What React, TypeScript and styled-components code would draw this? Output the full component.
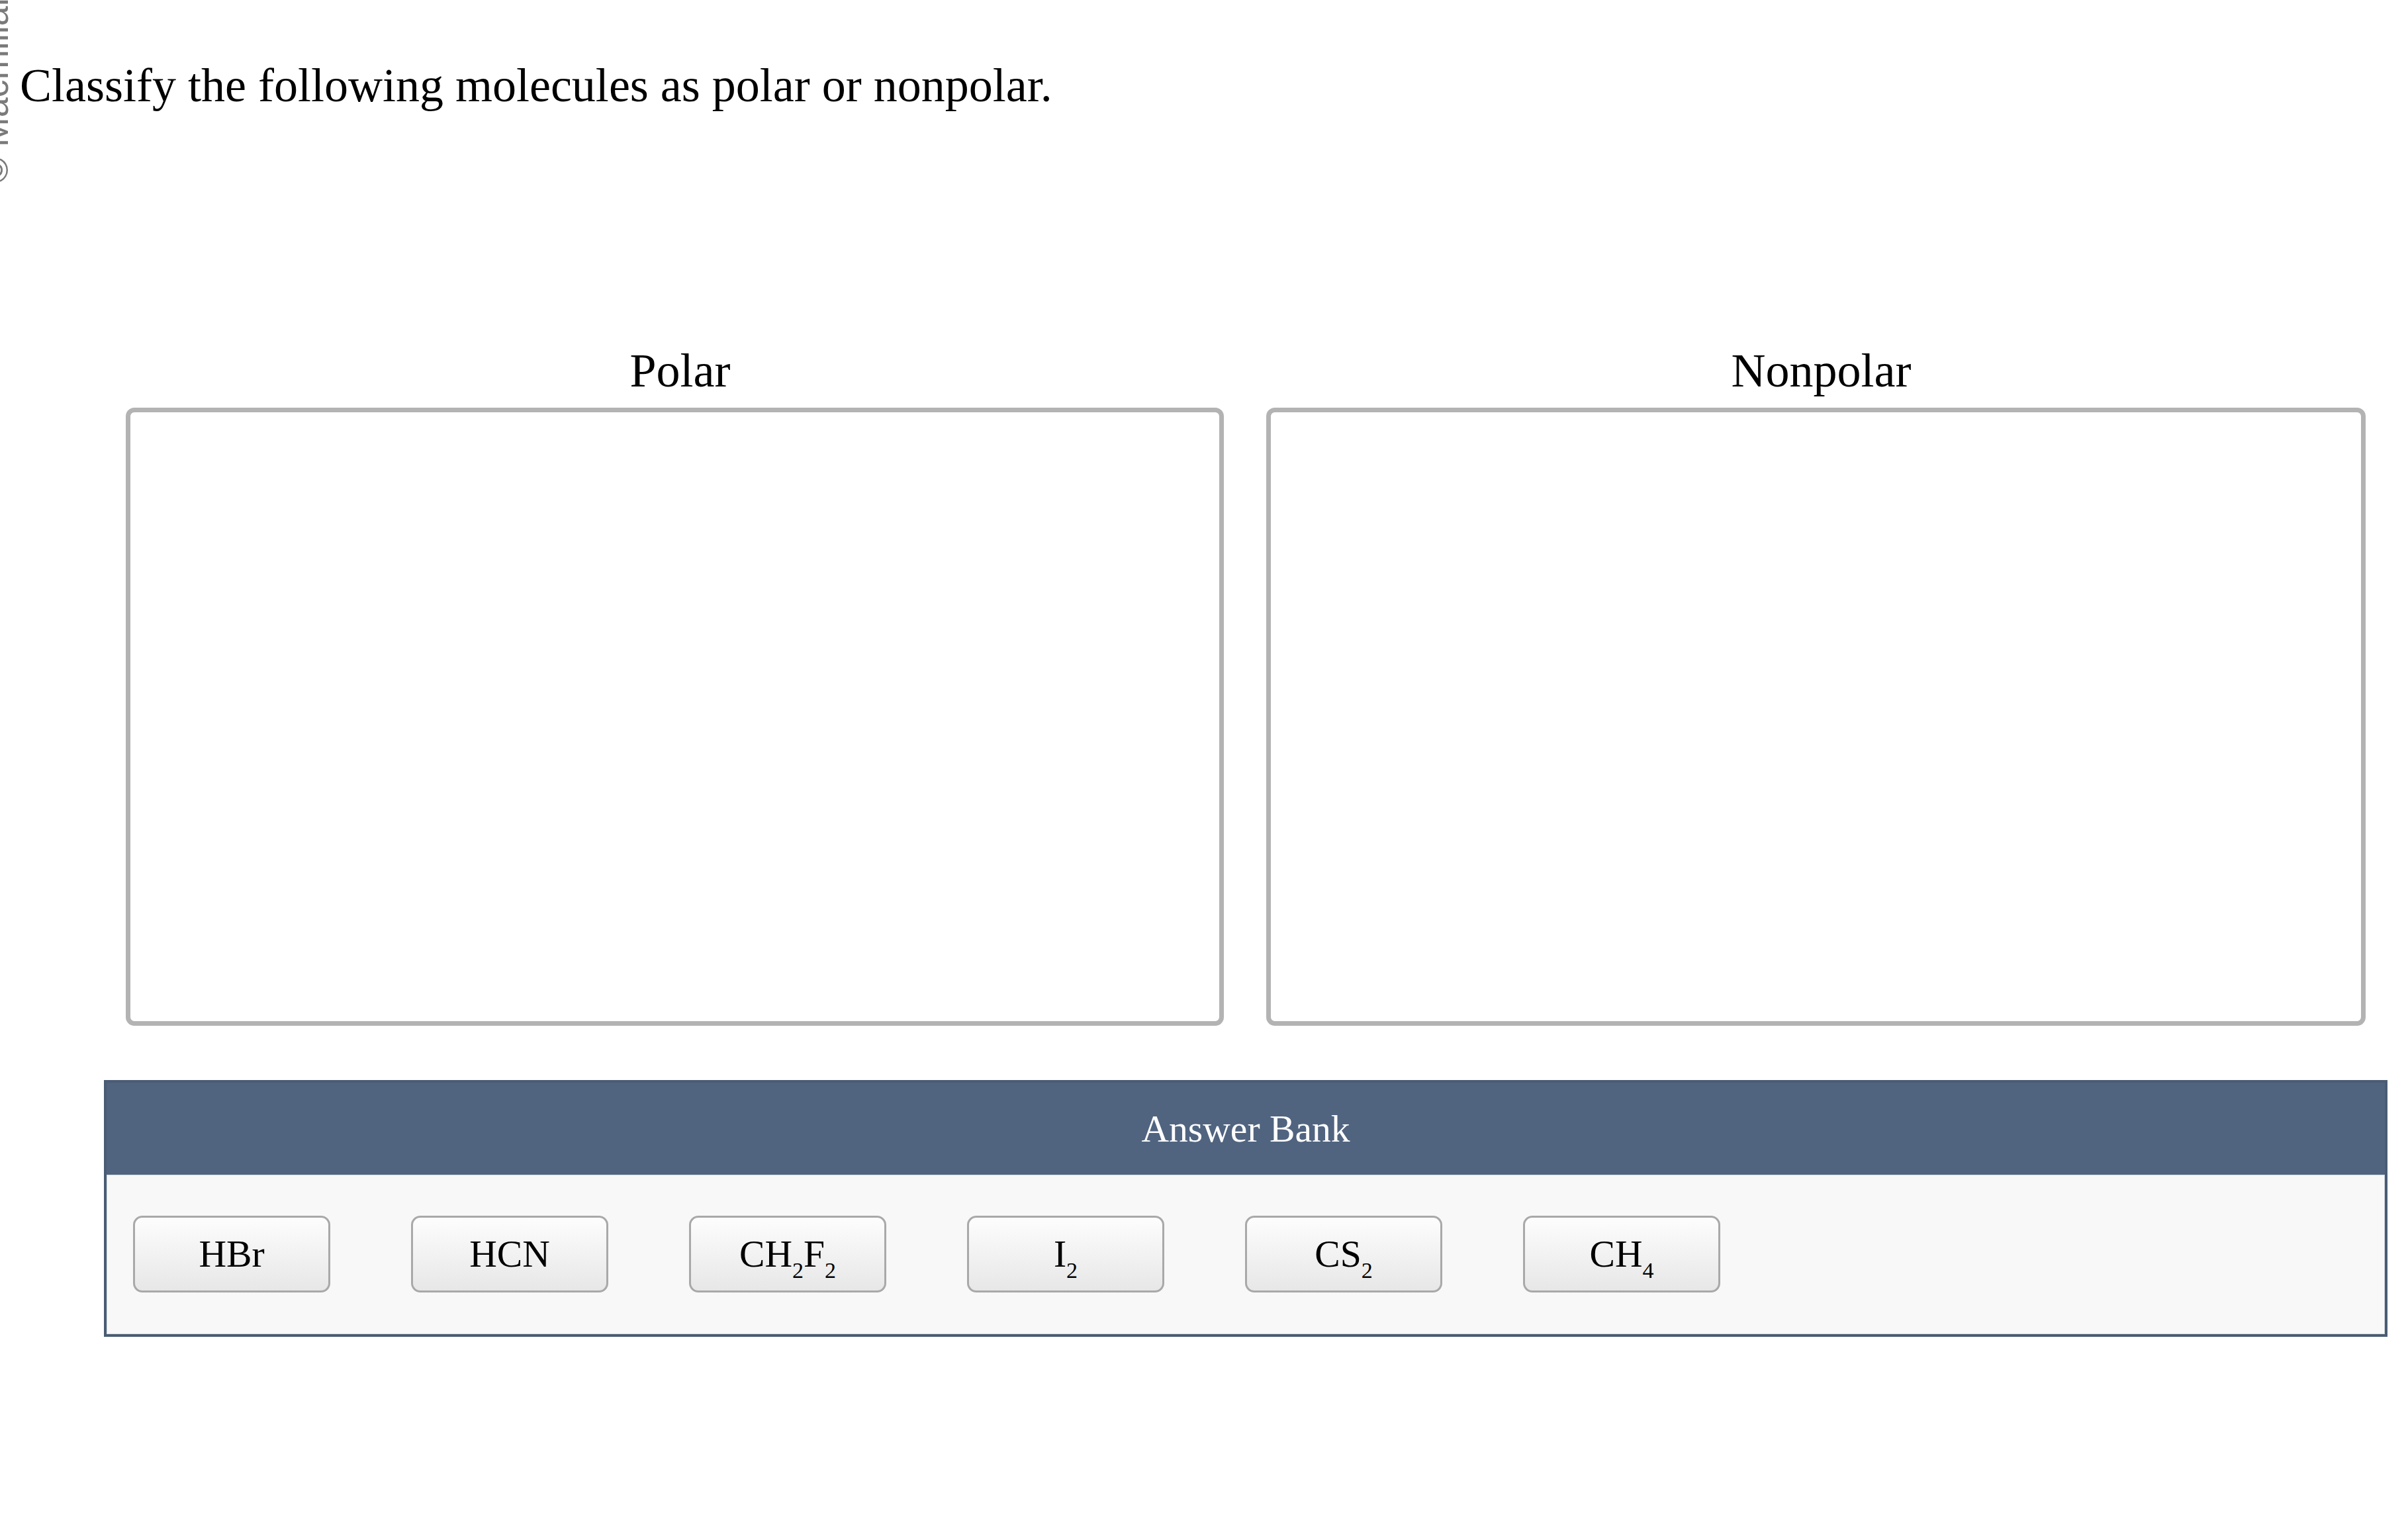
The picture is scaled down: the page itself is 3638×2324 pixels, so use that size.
import styled, { createGlobalStyle } from 'styled-components';

const GlobalStyle = createGlobalStyle`
  html, body {
    margin: 0;
    padding: 0;
    background: #ffffff;
  }

  body {
    font-family: 'Liberation Serif', 'Times New Roman', serif;
    color: #000000;
  }
`;

const Page = styled.div`
  position: relative;
  overflow: hidden;
  min-height: 2324px;
  padding-top: 89px;
  box-sizing: border-box;
`;

// watermark down the left edge, mostly off-page like in the original
const Watermark = styled.span`
  position: absolute;
  left: -34px;
  top: 277px;
  transform-origin: 0 0;
  transform: rotate(-90deg);
  font-family: 'Liberation Sans', Arial, sans-serif;
  font-size: 54px;
  line-height: 54px;
  color: #7a7a7a;
  white-space: nowrap;
`;

const Title = styled.h1`
  margin: 0 0 0 30px;
  font-size: 72px;
  line-height: 80px;
  font-weight: normal;
`;

const Columns = styled.div`
  display: grid;
  grid-template-columns: 1659px 1661px;
  column-gap: 64px;
  margin: 351px 0 0 190px;
`;

const Column = styled.div`
  display: flex;
  flex-direction: column;
`;

const ColumnLabel = styled.div`
  padding-left: 16px;
  text-align: center;
  font-size: 72px;
  line-height: 80px;
`;

const DropZone = styled.div`
  margin-top: 16px;
  height: 934px;
  box-sizing: border-box;
  border: 7px solid #b3b3b3;
  border-radius: 13px;
  background: #ffffff;
`;

const Bank = styled.section`
  margin: 82px 0 0 157px;
  width: 3450px;
  box-sizing: border-box;
  border: 4px solid #4a5c74;
`;

const BankHeader = styled.div`
  display: flex;
  align-items: center;
  justify-content: center;
  height: 139px;
  background: #506480;
  color: #ffffff;
  font-size: 57.6px;
`;

const BankBody = styled.div`
  display: flex;
  gap: 122px;
  padding: 62px 38px 63px 40px;
  background: #f8f8f8;
  box-shadow: inset 0 0 0 1px #d4d9df;
`;

const Chip = styled.div`
  display: flex;
  align-items: center;
  justify-content: center;
  width: 298px;
  height: 116px;
  box-sizing: border-box;
  border: 3px solid #a9a9a9;
  border-radius: 14px;
  background: linear-gradient(#fdfdfd, #e7e7e7);
`;

const FormulaText = styled.span`
  font-size: 57.6px;
  line-height: 66px;
  white-space: nowrap;
`;

const Sub = styled.sub`
  font-size: 34px;
  line-height: 0;
  vertical-align: -17px;
`;

type Part = string | { sub: string };

const molecules: Part[][] = [
  ['HBr'],
  ['HCN'],
  ['CH', { sub: '2' }, 'F', { sub: '2' }],
  ['I', { sub: '2' }],
  ['CS', { sub: '2' }],
  ['CH', { sub: '4' }],
];

function Formula({ parts }: { parts: Part[] }) {
  return (
    <FormulaText>
      {parts.map((p, i) =>
        typeof p === 'string' ? p : <Sub key={i}>{p.sub}</Sub>
      )}
    </FormulaText>
  );
}

export default function App() {
  return (
    <>
      <GlobalStyle />
      <Page>
        <Watermark>© Macmillan Learning</Watermark>
        <Title>Classify the following molecules as polar or nonpolar.</Title>

        <Columns>
          <Column>
            <ColumnLabel>Polar</ColumnLabel>
            <DropZone />
          </Column>
          <Column>
            <ColumnLabel>Nonpolar</ColumnLabel>
            <DropZone />
          </Column>
        </Columns>

        <Bank>
          <BankHeader>Answer Bank</BankHeader>
          <BankBody>
            {molecules.map((m, i) => (
              <Chip key={i}>
                <Formula parts={m} />
              </Chip>
            ))}
          </BankBody>
        </Bank>
      </Page>
    </>
  );
}
